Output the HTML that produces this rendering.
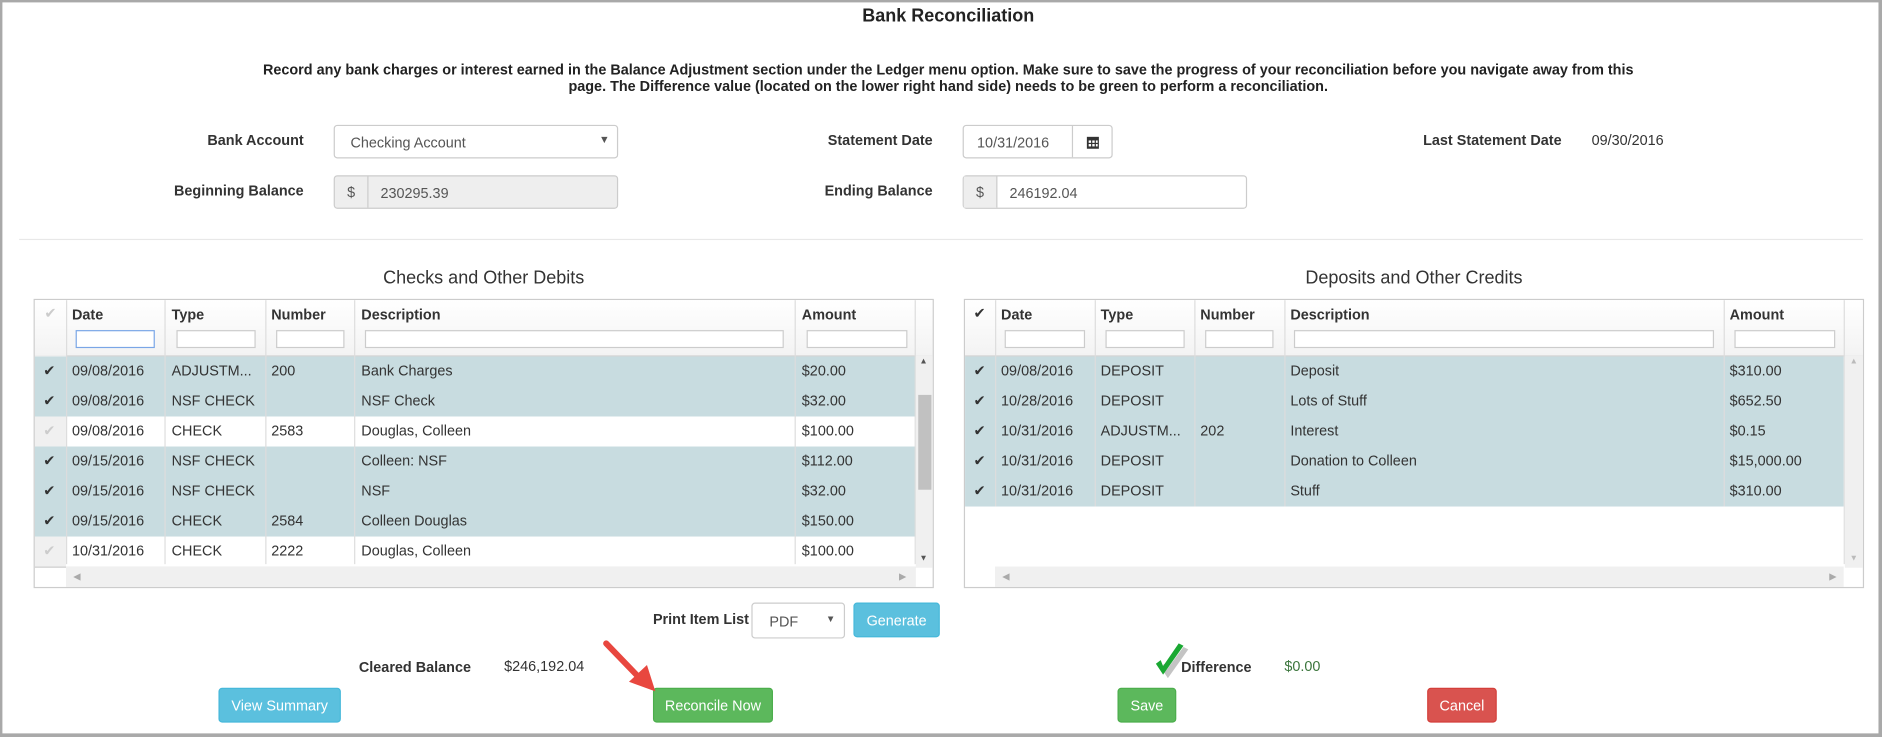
<!DOCTYPE html>
<html><head><meta charset="utf-8"><style>
html,body{margin:0;padding:0;background:#fff;overflow:hidden}
body{width:1882px;height:737px}
#w{position:absolute;left:0;top:0;width:1568px;height:614px;transform:scale(1.2003);transform-origin:0 0;font-family:"Liberation Sans",Arial,sans-serif;color:#333;font-size:12px}
.a{position:absolute;white-space:nowrap}
.b{font-weight:bold}
.r{text-align:right}
.inp{position:absolute;border:1px solid #ccc;border-radius:3px;background:#fff;box-sizing:border-box}
.btn{position:absolute;color:#fff;border-radius:3px;text-align:center;font-size:12px;box-sizing:border-box}
.tbl{position:absolute;border:1px solid #ccc;box-sizing:border-box;background:#fff;overflow:hidden}
.hd{position:absolute;left:0;top:0;height:46px;background:linear-gradient(#fff,#f3f3f3);border-bottom:1px solid #d4d4d4}
.col{position:absolute;top:0;bottom:0;border-left:1px solid #ddd}
.row{position:absolute;left:0;width:734px;height:25px;line-height:25px}
.sel{background:#c8dce0}
.c{position:absolute;line-height:25px;white-space:nowrap}
.fi{position:absolute;top:25px;height:15px;border:1px solid #ccc;background:#fff;box-sizing:border-box}
</style></head><body><div id="w">
<div class="a" style="left:0;top:0;width:1568px;height:2px;background:#a9a9a9"></div>
<div class="a" style="left:0;top:0;width:2px;height:614px;background:#a9a9a9"></div>
<div class="a" style="left:1565px;top:0;width:3px;height:614px;background:#a9a9a9"></div>
<div class="a" style="left:0;top:611px;width:1568px;height:3px;background:#a9a9a9"></div>

<div class="a b" style="left:0;width:1580px;text-align:center;top:5px;font-size:15px;color:#222">Bank Reconciliation</div>
<div class="a b" style="left:213px;width:1154px;text-align:center;top:51px;line-height:14px;white-space:normal;font-size:12px;color:#222">Record any bank charges or interest earned in the Balance Adjustment section under the Ledger menu option. Make sure to save the progress of your reconciliation before you navigate away from this page. The Difference value (located on the lower right hand side) needs to be green to perform a reconciliation.</div>

<div class="a b r" style="right:1315px;top:110px">Bank Account</div>
<div class="inp" style="left:278px;top:104px;width:237px;height:28px"><span class="a" style="left:13px;top:7px;color:#555">Checking Account</span><span class="a" style="right:6px;top:6px;font-size:9px;color:#555">▼</span></div>
<div class="a b r" style="right:791px;top:110px">Statement Date</div>
<div class="inp" style="left:802px;top:104px;width:125px;height:28px"><span class="a" style="left:11px;top:7px;color:#555">10/31/2016</span><div class="a" style="left:90px;top:0;width:1px;height:26px;background:#ccc"></div><svg class="a" style="left:102px;top:8px" width="11" height="11" viewBox="0 0 11 11"><rect x="0.5" y="1" width="10" height="10" fill="#333"/><rect x="2" y="4" width="2" height="2" fill="#fff"/><rect x="5" y="4" width="2" height="2" fill="#fff"/><rect x="2" y="7" width="2" height="2" fill="#fff"/><rect x="5" y="7" width="2" height="2" fill="#fff"/><rect x="8" y="4" width="1.5" height="2" fill="#fff"/><rect x="8" y="7" width="1.5" height="2" fill="#fff"/></svg></div>
<div class="a b r" style="right:267px;top:110px">Last Statement Date</div>
<div class="a" style="left:1326px;top:110px">09/30/2016</div>

<div class="a b r" style="right:1315px;top:152px">Beginning Balance</div>
<div class="inp" style="left:278px;top:146px;width:237px;height:28px;background:#eee"><div class="a" style="left:0;top:0;width:27px;height:26px;border-right:1px solid #ccc;text-align:center;line-height:26px;color:#555">$</div><span class="a" style="left:38px;top:7px;color:#555">230295.39</span></div>
<div class="a b r" style="right:791px;top:152px">Ending Balance</div>
<div class="inp" style="left:802px;top:146px;width:237px;height:28px"><div class="a" style="left:0;top:0;width:27px;height:26px;border-right:1px solid #ccc;background:#eee;text-align:center;line-height:26px;color:#555">$</div><span class="a" style="left:38px;top:7px;color:#555">246192.04</span></div>

<div class="a" style="left:16px;top:199px;width:1536px;height:1px;background:#e8e8e8"></div>

<div class="a" style="left:28px;width:750px;text-align:center;top:223px;font-size:15px">Checks and Other Debits</div>
<div class="a" style="left:803px;width:750px;text-align:center;top:223px;font-size:15px">Deposits and Other Credits</div>

<!-- left table -->
<div class="tbl" style="left:28px;top:249px;width:750px;height:241px">
 <div class="hd" style="width:748px"></div>
 <div class="a" style="left:0;top:46px;width:26px;height:176px;background:#f0f0f0"></div>
 <div class="a sel" style="left:0;top:47px;width:734px;height:50px"></div>
 <div class="a sel" style="left:0;top:122px;width:734px;height:75px"></div>
 <div class="a" style="left:0;top:222px;width:734px;height:1px;background:#ccc"></div>
 <div class="a" style="left:26px;top:222px;width:708px;height:18px;background:#f0f0f0"></div>
 <div class="col" style="left:26px;bottom:19px"></div><div class="col" style="left:108px;bottom:19px"></div><div class="col" style="left:192px;bottom:19px"></div><div class="col" style="left:266px;bottom:19px"></div><div class="col" style="left:633px;bottom:19px"></div><div class="col" style="left:733px;bottom:19px"></div>
 <div class="a" style="left:734px;top:46px;width:15px;height:177px;background:#f0f0f0"></div>
 <div class="a" style="left:736px;top:79px;width:11px;height:79px;background:#c1c1c1"></div>
 <span class="a" style="left:737px;top:48px;font-size:7px;color:#555">▲</span><span class="a" style="left:737px;top:212px;font-size:7px;color:#555">▼</span>
 <span class="a" style="left:32px;top:226px;font-size:8px;color:#aaa">◀</span><span class="a" style="left:720px;top:226px;font-size:8px;color:#aaa">▶</span>
 <span class="a" style="left:8px;top:4px;color:#ccc">✔</span>
 <span class="a b" style="left:31px;top:5px">Date</span><span class="a b" style="left:114px;top:5px">Type</span><span class="a b" style="left:197px;top:5px">Number</span><span class="a b" style="left:272px;top:5px">Description</span><span class="a b" style="left:639px;top:5px">Amount</span>
 <div class="fi" style="left:34px;width:66px;border:1px solid #7aa6e6"></div><div class="fi" style="left:118px;width:66px"></div><div class="fi" style="left:201px;width:57px"></div><div class="fi" style="left:275px;width:349px"></div><div class="fi" style="left:643px;width:84px"></div>
 <div style="position:absolute;left:0;top:47px;width:734px">
  <div class="row" style="top:0"><span class="c" style="left:7px">✔</span><span class="c" style="left:31px">09/08/2016</span><span class="c" style="left:114px">ADJUSTM...</span><span class="c" style="left:197px">200</span><span class="c" style="left:272px">Bank Charges</span><span class="c" style="left:639px">$20.00</span></div>
  <div class="row" style="top:25px"><span class="c" style="left:7px">✔</span><span class="c" style="left:31px">09/08/2016</span><span class="c" style="left:114px">NSF CHECK</span><span class="c" style="left:272px">NSF Check</span><span class="c" style="left:639px">$32.00</span></div>
  <div class="row" style="top:50px"><span class="c" style="left:7px;color:#ccc">✔</span><span class="c" style="left:31px">09/08/2016</span><span class="c" style="left:114px">CHECK</span><span class="c" style="left:197px">2583</span><span class="c" style="left:272px">Douglas, Colleen</span><span class="c" style="left:639px">$100.00</span></div>
  <div class="row" style="top:75px"><span class="c" style="left:7px">✔</span><span class="c" style="left:31px">09/15/2016</span><span class="c" style="left:114px">NSF CHECK</span><span class="c" style="left:272px">Colleen: NSF</span><span class="c" style="left:639px">$112.00</span></div>
  <div class="row" style="top:100px"><span class="c" style="left:7px">✔</span><span class="c" style="left:31px">09/15/2016</span><span class="c" style="left:114px">NSF CHECK</span><span class="c" style="left:272px">NSF</span><span class="c" style="left:639px">$32.00</span></div>
  <div class="row" style="top:125px"><span class="c" style="left:7px">✔</span><span class="c" style="left:31px">09/15/2016</span><span class="c" style="left:114px">CHECK</span><span class="c" style="left:197px">2584</span><span class="c" style="left:272px">Colleen Douglas</span><span class="c" style="left:639px">$150.00</span></div>
  <div class="row" style="top:150px"><span class="c" style="left:7px;color:#ccc">✔</span><span class="c" style="left:31px">10/31/2016</span><span class="c" style="left:114px">CHECK</span><span class="c" style="left:197px">2222</span><span class="c" style="left:272px">Douglas, Colleen</span><span class="c" style="left:639px">$100.00</span></div>
 </div>
</div>

<!-- right table -->
<div class="tbl" style="left:803px;top:249px;width:750px;height:241px">
 <div class="hd" style="width:748px"></div>
 <div class="a sel" style="left:0;top:47px;width:732px;height:125px"></div>
 <div class="a" style="left:25px;top:222px;width:707px;height:18px;background:#f0f0f0"></div>
 <div class="col" style="left:25px;top:0;bottom:67px"></div><div class="col" style="left:108px;bottom:67px"></div><div class="col" style="left:191px;bottom:67px"></div><div class="col" style="left:266px;bottom:67px"></div><div class="col" style="left:632px;bottom:67px"></div><div class="col" style="left:732px;bottom:19px"></div>
 <div class="a" style="left:733px;top:46px;width:16px;height:177px;background:#f0f0f0"></div>
 <span class="a" style="left:737px;top:48px;font-size:7px;color:#bbb">▲</span><span class="a" style="left:737px;top:212px;font-size:7px;color:#bbb">▼</span>
 <span class="a" style="left:31px;top:226px;font-size:8px;color:#aaa">◀</span><span class="a" style="left:720px;top:226px;font-size:8px;color:#aaa">▶</span>
 <span class="a" style="left:7px;top:4px">✔</span>
 <span class="a b" style="left:30px;top:5px">Date</span><span class="a b" style="left:113px;top:5px">Type</span><span class="a b" style="left:196px;top:5px">Number</span><span class="a b" style="left:271px;top:5px">Description</span><span class="a b" style="left:637px;top:5px">Amount</span>
 <div class="fi" style="left:33px;width:67px"></div><div class="fi" style="left:117px;width:66px"></div><div class="fi" style="left:200px;width:57px"></div><div class="fi" style="left:274px;width:350px"></div><div class="fi" style="left:641px;width:84px"></div>
 <div style="position:absolute;left:0;top:47px;width:732px">
  <div class="row" style="top:0"><span class="c" style="left:7px">✔</span><span class="c" style="left:30px">09/08/2016</span><span class="c" style="left:113px">DEPOSIT</span><span class="c" style="left:271px">Deposit</span><span class="c" style="left:637px">$310.00</span></div>
  <div class="row" style="top:25px"><span class="c" style="left:7px">✔</span><span class="c" style="left:30px">10/28/2016</span><span class="c" style="left:113px">DEPOSIT</span><span class="c" style="left:271px">Lots of Stuff</span><span class="c" style="left:637px">$652.50</span></div>
  <div class="row" style="top:50px"><span class="c" style="left:7px">✔</span><span class="c" style="left:30px">10/31/2016</span><span class="c" style="left:113px">ADJUSTM...</span><span class="c" style="left:196px">202</span><span class="c" style="left:271px">Interest</span><span class="c" style="left:637px">$0.15</span></div>
  <div class="row" style="top:75px"><span class="c" style="left:7px">✔</span><span class="c" style="left:30px">10/31/2016</span><span class="c" style="left:113px">DEPOSIT</span><span class="c" style="left:271px">Donation to Colleen</span><span class="c" style="left:637px">$15,000.00</span></div>
  <div class="row" style="top:100px"><span class="c" style="left:7px">✔</span><span class="c" style="left:30px">10/31/2016</span><span class="c" style="left:113px">DEPOSIT</span><span class="c" style="left:271px">Stuff</span><span class="c" style="left:637px">$310.00</span></div>
 </div>
</div>

<div class="a b r" style="right:944px;top:509px">Print Item List</div>
<div class="inp" style="left:626px;top:502px;width:78px;height:30px"><span class="a" style="left:14px;top:8px;color:#555">PDF</span><span class="a" style="right:7px;top:8px;font-size:8px;color:#555">▼</span></div>
<div class="btn" style="left:711px;top:502px;width:72px;height:29px;line-height:29px;background:#5bc0de;border:1px solid #46b8da">Generate</div>

<div class="a b" style="left:299px;top:549px">Cleared Balance</div>
<div class="a" style="left:420px;top:548px">$246,192.04</div>
<svg class="a" style="left:958px;top:535px" width="34" height="30" viewBox="0 0 34 30"><path d="M7 19 L13 28 L30 4 L26 2 L12 21 L10 16 Z" fill="#555" opacity=".35" transform="translate(2,2)"/><path d="M5 18 L11 27 L28 3 L24 1 L11 20 L9 15 Z" fill="#1aa832"/></svg>
<div class="a b" style="left:984px;top:549px">Difference</div>
<div class="a" style="left:1070px;top:548px;color:#3c763d">$0.00</div>

<div class="btn" style="left:182px;top:573px;width:102px;height:29px;line-height:29px;background:#5bc0de;border:1px solid #46b8da">View Summary</div>
<div class="btn" style="left:544px;top:573px;width:100px;height:29px;line-height:29px;background:#5cb85c;border:1px solid #4cae4c">Reconcile Now</div>
<div class="btn" style="left:931px;top:573px;width:49px;height:29px;line-height:29px;background:#5cb85c;border:1px solid #4cae4c">Save</div>
<div class="btn" style="left:1189px;top:573px;width:58px;height:29px;line-height:29px;background:#d9534f;border:1px solid #d43f3a">Cancel</div>

<svg class="a" style="left:498px;top:530px" width="56" height="50" viewBox="0 0 56 50"><path d="M7 6 L34 34" stroke="#e8473f" stroke-width="5" stroke-linecap="round"/><path d="M26 38 L48 46 L41 24 Z" fill="#e8473f"/></svg>
</div></body></html>
